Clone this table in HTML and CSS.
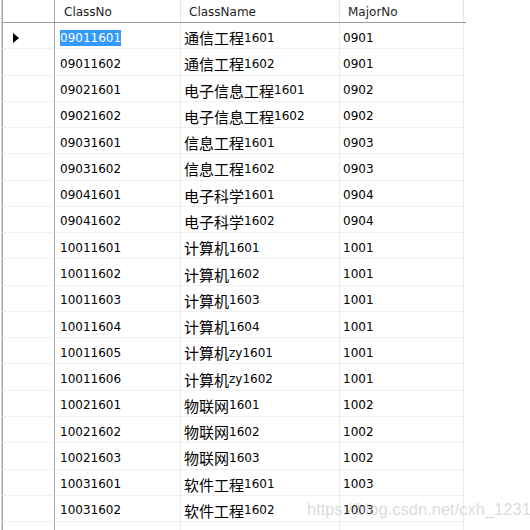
FILE: index.html
```html
<!DOCTYPE html>
<html>
<head>
<meta charset="utf-8">
<link rel="stylesheet" href="styles.css">
</head>
<body>
<div class="grid">
  <div class="row head">
    <div class="cell rh"></div>
    <div class="cell">ClassNo</div>
    <div class="cell">ClassName</div>
    <div class="cell">MajorNo</div>
  </div>
  <div class="row">
    <div class="cell rh"><span class="arrow"></span></div>
    <div class="cell"><span class="sel">09011601</span></div>
    <div class="cell"><span class="cjk">通信工程</span>1601</div>
    <div class="cell">0901</div>
  </div>
  <div class="row"><div class="cell rh"></div><div class="cell">09011602</div><div class="cell"><span class="cjk">通信工程</span>1602</div><div class="cell">0901</div></div>
  <div class="row"><div class="cell rh"></div><div class="cell">09021601</div><div class="cell"><span class="cjk">电子信息工程</span>1601</div><div class="cell">0902</div></div>
  <div class="row"><div class="cell rh"></div><div class="cell">09021602</div><div class="cell"><span class="cjk">电子信息工程</span>1602</div><div class="cell">0902</div></div>
  <div class="row"><div class="cell rh"></div><div class="cell">09031601</div><div class="cell"><span class="cjk">信息工程</span>1601</div><div class="cell">0903</div></div>
  <div class="row"><div class="cell rh"></div><div class="cell">09031602</div><div class="cell"><span class="cjk">信息工程</span>1602</div><div class="cell">0903</div></div>
  <div class="row"><div class="cell rh"></div><div class="cell">09041601</div><div class="cell"><span class="cjk">电子科学</span>1601</div><div class="cell">0904</div></div>
  <div class="row"><div class="cell rh"></div><div class="cell">09041602</div><div class="cell"><span class="cjk">电子科学</span>1602</div><div class="cell">0904</div></div>
  <div class="row"><div class="cell rh"></div><div class="cell">10011601</div><div class="cell"><span class="cjk">计算机</span>1601</div><div class="cell">1001</div></div>
  <div class="row"><div class="cell rh"></div><div class="cell">10011602</div><div class="cell"><span class="cjk">计算机</span>1602</div><div class="cell">1001</div></div>
  <div class="row"><div class="cell rh"></div><div class="cell">10011603</div><div class="cell"><span class="cjk">计算机</span>1603</div><div class="cell">1001</div></div>
  <div class="row"><div class="cell rh"></div><div class="cell">10011604</div><div class="cell"><span class="cjk">计算机</span>1604</div><div class="cell">1001</div></div>
  <div class="row"><div class="cell rh"></div><div class="cell">10011605</div><div class="cell"><span class="cjk">计算机</span>zy1601</div><div class="cell">1001</div></div>
  <div class="row"><div class="cell rh"></div><div class="cell">10011606</div><div class="cell"><span class="cjk">计算机</span>zy1602</div><div class="cell">1001</div></div>
  <div class="row"><div class="cell rh"></div><div class="cell">10021601</div><div class="cell"><span class="cjk">物联网</span>1601</div><div class="cell">1002</div></div>
  <div class="row"><div class="cell rh"></div><div class="cell">10021602</div><div class="cell"><span class="cjk">物联网</span>1602</div><div class="cell">1002</div></div>
  <div class="row"><div class="cell rh"></div><div class="cell">10021603</div><div class="cell"><span class="cjk">物联网</span>1603</div><div class="cell">1002</div></div>
  <div class="row"><div class="cell rh"></div><div class="cell">10031601</div><div class="cell"><span class="cjk">软件工程</span>1601</div><div class="cell">1003</div></div>
  <div class="row"><div class="cell rh"></div><div class="cell">10031602</div><div class="cell"><span class="cjk">软件工程</span>1602</div><div class="cell">1003</div></div>
  <div class="row"><div class="cell rh"></div><div class="cell"></div><div class="cell"></div><div class="cell"></div></div>
</div>
<div class="watermark">https://blog.csdn.net/cxh_1231</div>
</body>
</html>
```
FILE: styles.css
```css
html, body {
  margin: 0;
  padding: 0;
  background: #ffffff;
  overflow: hidden;
}
body {
  width: 530px;
  height: 530px;
  position: relative;
  font-family: "DejaVu Sans", "Noto Sans CJK SC", sans-serif;
  font-size: 12px;
  color: #000;
}
.grid {
  margin-left: 1px;
  width: 464px;
  border-left: 1px solid #d4d4d4;
  box-shadow: inset 1px 0 0 #a8a8a8;
}
.row {
  display: grid;
  grid-template-columns: 53px 126px 159px 124px;
  height: 26.28px;
  box-sizing: border-box;
}
.row.head {
  height: 23px;
  border-bottom: 1px solid #9a9a9a;
}
.cell {
  display: flex;
  align-items: center;
  padding-left: 3px;
  padding-top: 4px;
  box-sizing: border-box;
  border-right: 1px solid #ececec;
  border-bottom: 1px solid #f0f0f0;
  white-space: nowrap;
  overflow: hidden;
}
.row > .cell:nth-child(2) {
  padding-left: 5px;
}
.head .cell,
.row.head > .cell:nth-child(2) {
  padding-left: 8px;
  padding-top: 2px;
  border-bottom: none;
  color: #1e1e1e;
  border-right-color: #e4e4e4;
}
.row.head > .cell:nth-child(2) {
  padding-left: 9px;
}
.cell.rh {
  padding-left: 11px;
  border-right: 1px solid #a9a9a9;
}
.arrow {
  width: 0;
  height: 0;
  border-left: 6px solid #000;
  border-top: 5px solid transparent;
  border-bottom: 5px solid transparent;
}
.sel {
  background: #3399ff;
  color: #fff;
  padding: 1px 0;
}
.cjk {
  font-family: "Noto Sans CJK SC", sans-serif;
  font-size: 15px;
}
.watermark {
  position: absolute;
  left: 307px;
  top: 500px;
  font-family: "Liberation Sans", sans-serif;
  font-size: 16.5px;
  color: rgba(190, 190, 190, 0.55);
  white-space: nowrap;
}
```
